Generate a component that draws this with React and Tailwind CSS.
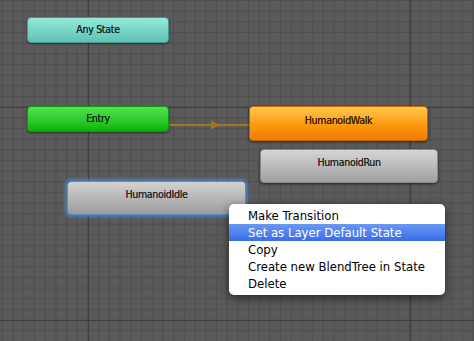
import React from "react";

const font = { fontFamily: '"DejaVu Sans Condensed", "DejaVu Sans", sans-serif' };

function Grid() {
  const minorX = [];
  for (let x = 88 - 10.7 * 9; x < 474; x += 10.7) minorX.push(x);
  const minorY = [];
  for (let y = 107 - 10.65 * 10; y < 341; y += 10.65) minorY.push(y);
  return (
    <svg className="absolute inset-0" width="474" height="341">
      {minorX.map((x, i) => (
        <line key={"x" + i} x1={x} y1="0" x2={x} y2="341" stroke="#505050" strokeWidth="1" />
      ))}
      {minorY.map((y, i) => (
        <line key={"y" + i} x1="0" y1={y} x2="474" y2={y} stroke="#505050" strokeWidth="1" />
      ))}
      <line x1="88.5" y1="0" x2="88.5" y2="341" stroke="#3e3e3e" strokeWidth="1.2" />
      <line x1="410.5" y1="0" x2="410.5" y2="341" stroke="#3e3e3e" strokeWidth="1.2" />
      <line x1="0" y1="107.5" x2="474" y2="107.5" stroke="#3e3e3e" strokeWidth="1.2" />
      <line x1="0" y1="320.5" x2="474" y2="320.5" stroke="#3e3e3e" strokeWidth="1.2" />
      {/* entry -> walk transition */}
      <line x1="169" y1="125" x2="249" y2="125" stroke="#a8741c" strokeWidth="2" />
      <polygon points="211,120.5 220,125 211,129.5" fill="#a8741c" />
    </svg>
  );
}

function Node({ className, children }) {
  return (
    <div
      className={"absolute flex justify-center rounded-[4px] text-[10.5px] tracking-[-0.3px] [text-shadow:0_0_0.4px_currentColor] " + className}
      style={font}
    >
      {children}
    </div>
  );
}

export default function App() {
  return (
    <div className="relative w-[474px] h-[341px] overflow-hidden bg-[#5a5a5a]">
      <Grid />

      <Node className="left-[27px] top-[17px] w-[142px] h-[26px] items-center bg-gradient-to-b from-[#94eadb] to-[#5fc2b3] border border-[#4a9a8e] text-[#13302c] shadow-[0_1px_2px_rgba(0,0,0,0.5)]">
        Any State
      </Node>

      <Node className="left-[27px] top-[106px] w-[142px] h-[26px] items-center bg-gradient-to-b from-[#4fe24f] to-[#00b400] border border-[#109a10] text-[#082e08] shadow-[0_1px_2px_rgba(0,0,0,0.5)]">
        Entry
      </Node>

      <Node className="left-[249px] top-[106px] w-[179px] h-[35px] items-start pt-[6px] bg-gradient-to-b from-[#ffc84a] via-[#ff9c10] to-[#ee7c00] border border-[#c06600] text-[#3a2000] shadow-[0_1px_3px_rgba(0,0,0,0.6)]">
        HumanoidWalk
      </Node>

      <Node className="left-[260px] top-[149px] w-[178px] h-[34px] items-start pt-[5px] bg-gradient-to-b from-[#d6d6d6] to-[#a0a0a0] border border-[#8a8a8a] text-[#2a2a2a] shadow-[0_1px_3px_rgba(0,0,0,0.6)]">
        HumanoidRun
      </Node>

      <Node className="left-[67px] top-[181px] w-[179px] h-[34px] items-start pt-[5px] bg-gradient-to-b from-[#d2d2d2] to-[#9c9c9c] border border-[#4f8fd0] text-[#2a2a2a] shadow-[0_0_3px_2px_rgba(80,150,230,0.6)]">
        HumanoidIdle
      </Node>

      <div
        className="absolute left-[229px] top-[204px] w-[216px] flex flex-col py-[3px] bg-white rounded-[5px] shadow-[0_3px_10px_rgba(0,0,0,0.55)] text-[13px] text-black leading-[17px]"
        style={font}
      >
        <div className="pl-[19px] h-[17px]">Make Transition</div>
        <div className="pl-[19px] h-[17px] bg-gradient-to-b from-[#6a98f4] to-[#3a6de8] text-white">
          Set as Layer Default State
        </div>
        <div className="pl-[19px] h-[17px]">Copy</div>
        <div className="pl-[19px] h-[17px]">Create new BlendTree in State</div>
        <div className="pl-[19px] h-[17px]">Delete</div>
      </div>
    </div>
  );
}
